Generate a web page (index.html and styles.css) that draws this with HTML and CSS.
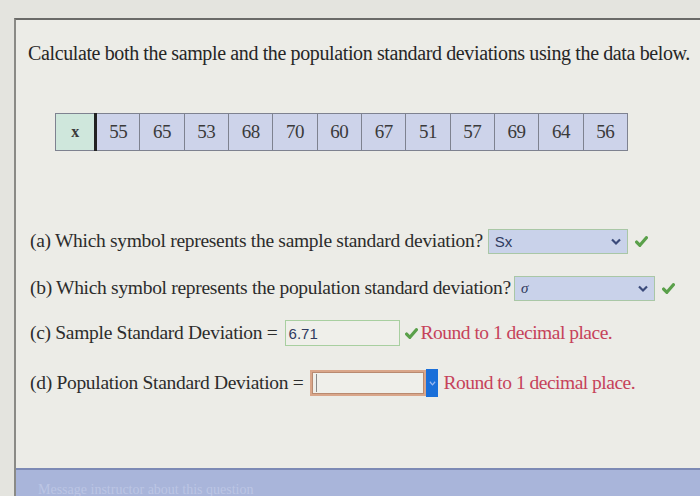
FILE: index.html
```html
<!DOCTYPE html>
<html>
<head>
<meta charset="utf-8">
<link rel="stylesheet" href="styles.css">
</head>
<body>
<div class="panel">
  <p class="title">Calculate both the sample and the population standard deviations using the data below.</p>
  <table class="data">
    <tr>
      <td class="head">x</td>
      <td>55</td><td>65</td><td>53</td><td>68</td><td>70</td><td>60</td><td>67</td><td>51</td><td>57</td><td>69</td><td>64</td><td>56</td>
    </tr>
  </table>
  <div class="qs">
    <div class="q q-a">
      <span>(a) Which symbol represents the sample standard deviation?</span>
      <span class="select sel-a"><span class="val">Sx</span><svg class="chev" viewBox="0 0 10 8" width="10" height="8"><path d="M1 1.5 L5 5.5 L9 1.5" fill="none" stroke="#3a4a7a" stroke-width="2.2"/></svg></span>
      <svg class="check" viewBox="0 0 12 10" width="13" height="11"><path d="M1.5 5.5 L4.5 8.5 L10.5 1.5" fill="none" stroke="#5aa04a" stroke-width="3" stroke-linecap="round" stroke-linejoin="round"/></svg>
    </div>
    <div class="q q-b">
      <span>(b) Which symbol represents the population standard deviation?</span>
      <span class="select sel-b"><span class="val sigma">σ</span><svg class="chev" viewBox="0 0 10 8" width="10" height="8"><path d="M1 1.5 L5 5.5 L9 1.5" fill="none" stroke="#3a4a7a" stroke-width="2.2"/></svg></span>
      <svg class="check" viewBox="0 0 12 10" width="13" height="11"><path d="M1.5 5.5 L4.5 8.5 L10.5 1.5" fill="none" stroke="#5aa04a" stroke-width="3" stroke-linecap="round" stroke-linejoin="round"/></svg>
    </div>
    <div class="q q-c">
      <span>(c) Sample Standard Deviation =</span>
      <span class="input ok"><span class="val">6.71</span></span>
      <svg class="check" viewBox="0 0 12 10" width="13" height="11"><path d="M1.5 5.5 L4.5 8.5 L10.5 1.5" fill="none" stroke="#5aa04a" stroke-width="3" stroke-linecap="round" stroke-linejoin="round"/></svg>
      <span class="hint">Round to 1 decimal place.</span>
    </div>
    <div class="q q-d">
      <span>(d) Population Standard Deviation =</span>
      <span class="input bad"><span class="caret"></span></span>
      <span class="blue"><svg viewBox="0 0 8 8" width="7" height="7"><path d="M1 2 L4 5.5 L7 2" fill="none" stroke="#9ab8f0" stroke-width="1.4"/></svg></span>
      <span class="hint">Round to 1 decimal place.</span>
    </div>
  </div>
  <div class="footer"><span>Message instructor about this question</span></div>
</div>
</body>
</html>
```
FILE: styles.css
```css
html, body {
  margin: 0;
  padding: 0;
}
body {
  width: 700px;
  height: 496px;
  overflow: hidden;
  background: #e4e4df;
  font-family: "Liberation Serif", "Times New Roman", serif;
  color: #2a2a2a;
}
.panel {
  margin: 18px 0 0 14px;
  border-top: 2px solid #6a6a68;
  border-left: 2px solid #8a8a86;
  background: #ecece7;
  height: 478px;
  display: flex;
  flex-direction: column;
}
.title {
  margin: 22px 0 0 12px;
  font-size: 20px;
  letter-spacing: -0.38px;
  color: #262626;
  white-space: nowrap;
}
.data {
  margin: 48px 0 0 39px;
  border-collapse: collapse;
  table-layout: fixed;
  width: 573px;
  font-size: 19px;
  letter-spacing: -0.5px;
  color: #3a3a3a;
}
.data td {
  background: #cdd3ea;
  border: 1px solid #7e8290;
  height: 36px;
  padding: 0;
  text-align: center;
  vertical-align: middle;
}
.data td.head {
  width: 38px;
  background: #cfe7dc;
  border-right: 3px solid #222;
  font-weight: bold;
  font-size: 16px;
}
.qs {
  margin: 77px 0 0 14px;
  display: flex;
  flex-direction: column;
  gap: 21px;
  font-size: 19.5px;
  letter-spacing: -0.3px;
  color: #2c2c2c;
}
.q {
  display: flex;
  align-items: center;
  height: 26px;
  white-space: nowrap;
}
.q-c { margin-top: -2px; }
.q-d { margin-top: 3px; }
.select {
  display: flex;
  align-items: center;
  justify-content: space-between;
  background: #c9d2ea;
  border: 1.5px solid #a9c7a6;
  height: 25px;
  box-sizing: border-box;
  padding: 0 6px 0 6px;
  margin-left: 5px;
}
.sel-a { width: 140px; }
.sel-b { width: 141px; margin-left: 3px; }
.val {
  font-family: "Liberation Sans", Arial, sans-serif;
  font-size: 15px;
  color: #2f3a5e;
  letter-spacing: 0;
}
.sigma {
  font-family: "Liberation Serif", serif;
  font-style: italic;
  font-size: 15px;
}
.chev { margin-top: 1px; }
.check { margin-left: 7px; }
.input {
  display: flex;
  align-items: center;
  height: 26px;
  box-sizing: border-box;
  background: #efefea;
  margin-left: 7px;
}
.input.ok {
  width: 115px;
  border: 1.5px solid #a8cfa0;
  padding-left: 3px;
}
.input.bad {
  width: 116px;
  border: 2px solid #d9a68a;
  box-shadow: inset 0 0 0 1px #b98a70;
  padding-left: 4px;
}
.caret {
  width: 1px;
  height: 18px;
  background: #888;
}
.blue {
  width: 12px;
  height: 28px;
  background: #1a6fd9;
  display: flex;
  align-items: center;
  justify-content: center;
}
.hint {
  color: #c6425a;
  font-size: 19.5px;
  letter-spacing: -0.5px;
  margin-left: 6px;
}
.q-c .hint { margin-left: 3px; }
.q-c .check { margin-left: 5px; }
.q-d .hint { margin-left: 5px; }
.footer {
  margin-top: auto;
  height: 30px;
  background: #a9b5da;
  border-top: 2px solid #7d8ab5;
  padding-left: 22px;
  font-size: 14px;
  line-height: 14px;
  color: #bcc5e4;
  overflow: hidden;
  box-sizing: border-box;
}
.footer span {
  display: block;
  margin-top: 13px;
}
```
